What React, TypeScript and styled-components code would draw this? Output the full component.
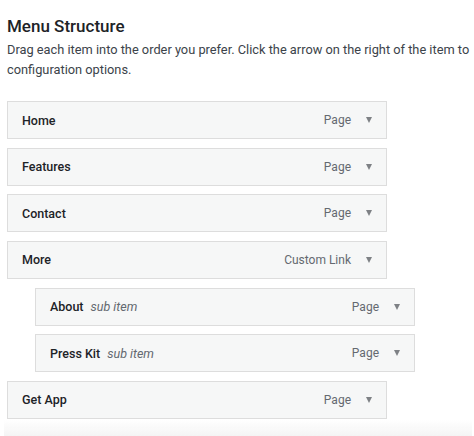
import styled, { createGlobalStyle } from "styled-components";

const GlobalStyle = createGlobalStyle`
    html, body {
        margin: 0;
        padding: 0;
        background: #ffffff;
        overflow: hidden;
    }
    body {
        font-family: Roboto, "Liberation Sans", Arial, sans-serif;
        color: #1d2327;
    }
`;

type MenuItem = {
    title: string;
    type: string;
    sub?: boolean;
};

const items: MenuItem[] = [
    { title: "Home", type: "Page" },
    { title: "Features", type: "Page" },
    { title: "Contact", type: "Page" },
    { title: "More", type: "Custom Link" },
    { title: "About", type: "Page", sub: true },
    { title: "Press Kit", type: "Page", sub: true },
    { title: "Get App", type: "Page" },
];

export default function App() {
    return (
        <>
            <GlobalStyle />
            <Page>
                <Title>Menu Structure</Title>
                <Description>
                    Drag each item into the order you prefer. Click the arrow on the right of the item to configuration options.
                </Description>

                <MenuList>
                    {items.map((item) => (
                        <ItemBar key={item.title} $sub={item.sub}>
                            <ItemTitle>
                                <strong>{item.title}</strong>
                                {item.sub && <em>sub item</em>}
                            </ItemTitle>
                            <ItemControls>
                                <span>{item.type}</span>
                                <Arrow />
                            </ItemControls>
                        </ItemBar>
                    ))}
                </MenuList>
            </Page>
            <BottomFade />
        </>
    );
}

const Page = styled.div`
    padding: 16px 7px 0;
`;

const Title = styled.h2`
    margin: 0;
    font-size: 17px;
    line-height: 20px;
    font-weight: 500;
    color: #1d2327;
`;

const Description = styled.p`
    margin: 4px 0 0;
    width: 466px;
    font-size: 12.8px;
    line-height: 20px;
    color: #3c434a;
`;

const MenuList = styled.ul`
    list-style: none;
    margin: 21px 0 0;
    padding: 0;
    display: flex;
    flex-direction: column;
    gap: 8.67px;
`;

const ItemBar = styled.li<{ $sub?: boolean }>`
    box-sizing: border-box;
    width: 380px;
    height: 38px;
    margin-left: ${(p) => (p.$sub ? "28px" : "0")};
    padding: 0 14px;
    display: flex;
    align-items: center;
    justify-content: space-between;
    background: #f6f7f7;
    border: 1px solid #dddddd;
`;

const ItemTitle = styled.div`
    display: flex;
    align-items: baseline;
    font-size: 12.5px;
    strong{
        font-weight: 500;
        color: #1d2327;
    }
    em{
        margin-left: 7px;
        font-size: 12.5px;
        font-style: italic;
        color: #646970;
    }
`;

const ItemControls = styled.div`
    display: flex;
    align-items: center;
    font-size: 12px;
    color: #646970;
`;

const Arrow = styled.i`
    display: block;
    margin-left: 15px;
    width: 0;
    height: 0;
    border-left: 3.5px solid transparent;
    border-right: 3.5px solid transparent;
    border-top: 6px solid #7e8185;
`;

const BottomFade = styled.div`
    position: fixed;
    left: 4px;
    right: 2px;
    bottom: 0;
    height: 16px;
    background: linear-gradient(to bottom, rgba(246, 246, 246, 0), #f4f4f4);
`;
